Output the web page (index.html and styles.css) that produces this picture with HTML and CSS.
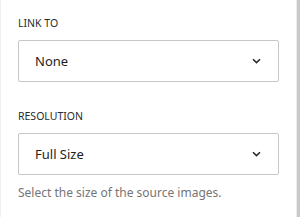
FILE: index.html
```html
<!DOCTYPE html>
<html lang="en">
<head>
    <meta charset="UTF-8">
    <title>Gallery settings</title>
    <link rel="stylesheet" href="styles.css">
</head>
<body>
    <div class="sidebar">
        <div class="panel">
            <div class="field">
                <label class="field-label">Link to</label>
                <div class="select">
                    <span>None</span>
                    <svg class="chevron" width="9" height="6" viewBox="0 0 9 6"><path d="M1 1.2l3.5 3.4 3.5-3.4" fill="none" stroke="#2b2b2b" stroke-width="1.6"/></svg>
                </div>
            </div>
            <div class="field">
                <label class="field-label">Resolution</label>
                <div class="select">
                    <span>Full Size</span>
                    <svg class="chevron" width="9" height="6" viewBox="0 0 9 6"><path d="M1 1.2l3.5 3.4 3.5-3.4" fill="none" stroke="#2b2b2b" stroke-width="1.6"/></svg>
                </div>
                <p class="help">Select the size of the source images.</p>
            </div>
        </div>
        <div class="scrollbar"></div>
    </div>
</body>
</html>
```
FILE: styles.css
```css
body {
    margin: 0;
    background-color: #fff;
    font-family: 'Noto Sans', 'Open Sans', sans-serif;
    color: #1e1e1e;
}
.sidebar {
    display: flex;
    height: 217px;
}
.panel {
    flex: 1;
    border-left: 1px solid #f0f0f0;
    border-right: 1px solid #ececec;
    padding: 15px 17px 0 17px;
}
.scrollbar {
    width: 3px;
    background-color: #c9c9c9;
}
.field {
    margin-bottom: 26px;
}
.field-label {
    display: block;
    font-size: 10.5px;
    line-height: 16px;
    text-transform: uppercase;
    color: #2b2b2b;
    margin-bottom: 9px;
}
.select {
    display: flex;
    align-items: center;
    justify-content: space-between;
    height: 40px;
    border: 1px solid #c7c7c7;
    border-radius: 2px;
    padding: 0 17px 0 16px;
    font-size: 13px;
    color: #1e1e1e;
}
.chevron {
    display: block;
}
.help {
    margin: 10px 0 0;
    font-size: 12px;
    line-height: 16px;
    color: #757575;
}
```
